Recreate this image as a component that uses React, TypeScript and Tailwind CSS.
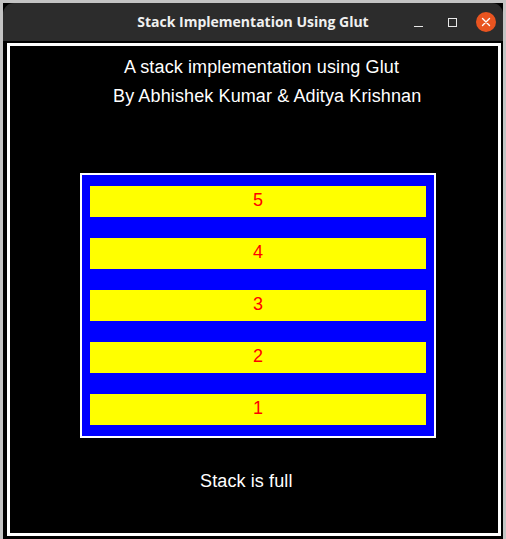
import React from "react";

const items = [5, 4, 3, 2, 1];

function TitleBar() {
  return (
    <div className="flex h-[38px] items-center bg-[#2c2c2c] rounded-t-[11px]">
      <div className="w-[95px]" />
      <div className="flex-1 text-center text-[14px] font-bold text-[#f0f0f0] font-['Open_Sans',sans-serif] leading-none">
        Stack Implementation Using Glut
      </div>
      <div className="flex w-[95px] items-center justify-end gap-[14px] pr-[7px]">
        <div className="flex h-[20px] w-[20px] items-end justify-center pb-[5px]">
          <div className="h-[1.5px] w-[9px] bg-[#e8e8e8]" />
        </div>
        <div className="flex h-[20px] w-[20px] items-center justify-center">
          <div className="h-[9px] w-[9px] border border-[#e8e8e8]" />
        </div>
        <div className="flex h-[20px] w-[20px] items-center justify-center rounded-full bg-[#e95420]">
          <svg width="10" height="10" viewBox="0 0 10 10">
            <path d="M1.5 1.5 L8.5 8.5 M8.5 1.5 L1.5 8.5" stroke="#fff" strokeWidth="1.4" strokeLinecap="round" />
          </svg>
        </div>
      </div>
    </div>
  );
}

function StackBox() {
  return (
    <div className="ml-[70px] mt-[68px] w-[356px] border-2 border-white bg-[#0000ff] px-[8px] py-[11px]">
      <div className="flex flex-col gap-[21px]">
        {items.map((n) => (
          <div
            key={n}
            className="flex h-[31px] items-center justify-center bg-[#ffff00] pb-[3px] text-[18px] leading-none text-[#ff0000]"
          >
            {n}
          </div>
        ))}
      </div>
    </div>
  );
}

export default function App() {
  return (
    <div className="h-[539px] w-[506px] overflow-hidden bg-[#c4c4c4] px-[3px] pt-[3px] font-['Liberation_Sans',Arial,sans-serif]">
      <div className="flex h-[536px] flex-col bg-black">
        <TitleBar />
        <div className="flex-1 pl-[4px] pr-[2px] pt-[2px] pb-[3px]">
          <div className="flex h-full flex-col items-start border-[3px] border-white text-white">
            <div className="ml-[114px] mt-[11.5px] text-[18px] leading-none tracking-[0.12px]">
              A stack implementation using Glut
            </div>
            <div className="ml-[103px] mt-[11px] text-[18px] leading-none tracking-[0.12px]">
              By Abhishek Kumar &amp; Aditya Krishnan
            </div>
            <StackBox />
            <div className="ml-[190px] mt-[34.5px] text-[18px] leading-none tracking-[0.12px]">
              Stack is full
            </div>
          </div>
        </div>
      </div>
    </div>
  );
}
